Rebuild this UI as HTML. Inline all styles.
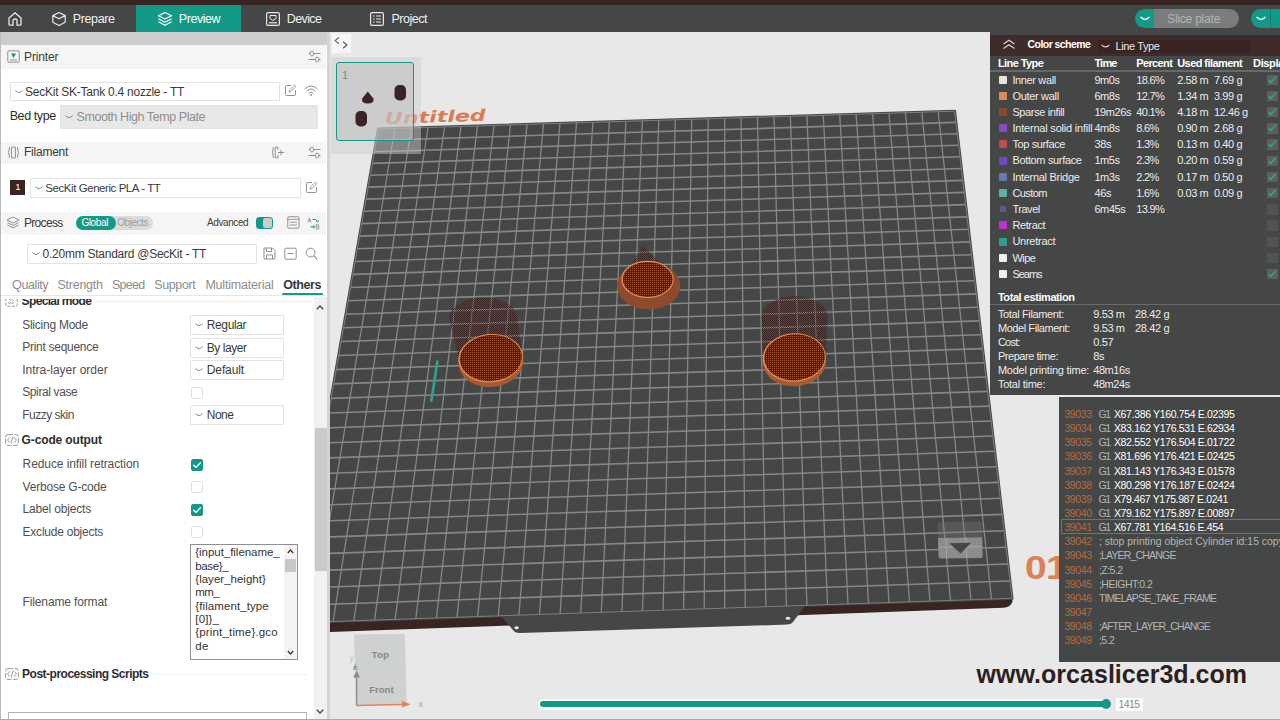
<!DOCTYPE html>
<html lang="en"><head><meta charset="utf-8"><title>OrcaSlicer Preview</title>
<style>
*{box-sizing:border-box;margin:0;padding:0}
html,body{width:1280px;height:720px;overflow:hidden;background:#e8e8e8}
body{font-family:"Liberation Sans",sans-serif;font-size:12px;color:#3a3a3a;position:relative}
.abs{position:absolute}
.t{position:absolute;white-space:nowrap;line-height:1}
svg{position:absolute;overflow:visible}

/* ---------- top bar ---------- */
#titlestrip{left:0;top:0;width:1280px;height:5px;background:#382423}
#topbar{left:0;top:5px;width:1280px;height:27px;background:#454746}
#tab-active{left:136px;top:5px;width:105px;height:27px;background:#139988}
.toptxt{color:#f2f2f2;font-size:12.5px;top:12px}
#slice-l{left:1135px;top:9px;width:19px;height:19px;background:#139988;border-radius:10px 0 0 10px}
#slice-r{left:1154px;top:9px;width:85px;height:19px;background:#7b7d7c;border-radius:0 10px 10px 0}
#slice-t{left:1167px;top:12.5px;font-size:12px;color:#b9bbba}
#print-l{left:1251px;top:9px;width:29px;height:19px;background:#139988;border-radius:10px 0 0 10px}
#print-d{left:1269.5px;top:9px;width:1.5px;height:19px;background:#107a6d}

/* ---------- left panel ---------- */
#left{left:0;top:32px;width:327px;height:688px;background:#fff}
#leftborder{left:0;top:32px;width:1px;height:688px;background:#b9bbba}
#band{left:0;top:32px;width:327px;height:13px;background:#cccecd}
.hdr{left:1px;width:325px;background:#f5f5f5}
.hdrtxt{font-size:12.5px;color:#3c3c3c}
.combo{border:1px solid #e2e2e2;background:#fff;border-radius:1px}
.ctext{font-size:12px;color:#3c3c3c}
.lbl{font-size:12px;color:#5a5a5a;left:22px}
.bold{font-weight:bold;color:#2e2e2e}
.cb{left:190.5px;width:12px;height:12px;border:1px solid #e0e0e0;border-radius:2px;background:#fff}
.cb.on{background:#139988;border-color:#139988}
.tabtxt{font-size:12.5px;color:#8c8c8c;top:278px}
#splitter{left:327px;top:32px;width:3px;height:688px;background:#d4d4d4}
#lscroll{left:314px;top:297px;width:13px;height:423px;background:#f1f1f1}
#lthumb{left:314.5px;top:428px;width:12px;height:142.5px;background:#c9cbca}

/* ---------- viewport ---------- */
#view{left:330px;top:32px;width:950px;height:688px;background:#e8e8e8}
#bottomline{left:0;top:719px;width:1280px;height:1px;background:#a9a9a9}

/* ---------- legend panel ---------- */
#legend{left:990px;top:32px;width:290px;height:363px;background:#454746}
#leghdr{left:990px;top:34.5px;width:290px;height:21px;background:#3f2b2a}
#legcombo{left:1098px;top:39.5px;width:153px;height:13.5px;background:#382423}
.lw{color:#f4f4f4;font-size:11px}
.lwb{color:#fff;font-size:11px;font-weight:bold}
.sw{width:8px;height:8px;left:999px;border-radius:1px}
.lcb{left:1267px;width:10.5px;height:10.5px;background:#525453}
.lcb.on{background:#5c5f5e}

/* ---------- gcode panel ---------- */
#gcode{left:1059px;top:397px;width:221px;height:265px;background:#454746}
.gn{color:#c9703f;font-size:10.5px;left:1064px}
.gt{color:#fff;font-size:10.5px;left:1099px}
.gg{color:#b4b6b5}
#gcur{left:1061px;top:519px;width:222px;height:15px;border:1px solid #8a6a5a}

</style></head>
<body>
<!-- ======= VIEWPORT ======= -->
<div id="view" class="abs"></div>
<svg id="plate" width="1280" height="720" viewBox="0 0 1280 720" style="left:0;top:0">
<defs>
<clipPath id="vclip"><rect x="330" y="32" width="950" height="688"/></clipPath>
<pattern id="dots" width="2" height="2" patternUnits="userSpaceOnUse"><rect width="2" height="2" fill="#3a2420"/><rect x="0" y="0" width="1" height="1" fill="#a05633"/></pattern>
<pattern id="ghost" width="2" height="2" patternUnits="userSpaceOnUse"><rect x="0" y="0" width="1" height="1" fill="#382423"/><rect x="1" y="1" width="1" height="1" fill="#382423" opacity=".75"/></pattern>
</defs>
<g clip-path="url(#vclip)">
<path d="M291.8,622.9 L1012.0,598.3 L1012.5,601.3 Q1011.0,607.3 1003.0,607.8 L291.8,633.4 Z" fill="#382423"/>
<path d="M500,614 L806,603 L804.5,606.5 L793,622 Q791,624.5 787,624.6 L520,633 Q515,633.2 513,630 L502,617 Z" fill="#454746"/>
<ellipse cx="516.6" cy="627.8" rx="2.2" ry="1.5" fill="#f2f2f2"/>
<ellipse cx="788" cy="618.3" rx="2.2" ry="1.5" fill="#f2f2f2"/>
<polygon points="378.4,129.0 954.6,111.2 1012.0,598.3 291.8,622.9" fill="#454746" stroke="#454746" stroke-width="3" stroke-linejoin="round"/>
<path d="M394.9,128.5 L312.5,622.2 M411.4,128.0 L333.1,621.5 M428.0,127.5 L353.8,620.8 M444.5,127.0 L374.5,620.1 M461.0,126.4 L395.1,619.4 M477.5,125.9 L415.8,618.7 M494.0,125.4 L436.4,618.0 M510.5,124.9 L457.0,617.3 M527.0,124.4 L477.7,616.6 M543.5,123.9 L498.3,615.8 M560.0,123.4 L518.9,615.1 M576.5,122.9 L539.5,614.4 M592.9,122.4 L560.1,613.7 M609.4,121.9 L580.7,613.0 M625.9,121.4 L601.3,612.3 M642.4,120.8 L621.9,611.6 M658.8,120.3 L642.5,610.9 M675.3,119.8 L663.1,610.2 M691.7,119.3 L683.6,609.5 M708.2,118.8 L704.2,608.8 M724.7,118.3 L724.7,608.1 M741.1,117.8 L745.3,607.4 M757.5,117.3 L765.9,606.7 M774.0,116.8 L786.4,606.0 M790.4,116.3 L806.9,605.3 M806.9,115.8 L827.5,604.6 M823.3,115.3 L848.0,603.9 M839.7,114.7 L868.5,603.2 M856.1,114.2 L889.0,602.5 M872.6,113.7 L909.5,601.8 M889.0,113.2 L930.0,601.1 M905.4,112.7 L950.5,600.4 M921.8,112.2 L971.0,599.7 M938.2,111.7 L991.5,599.0" stroke="#868886" stroke-width="1.3" fill="none"/>
<path d="M376.4,140.4 L955.9,122.4 M374.4,151.8 L957.3,133.7 M372.4,163.4 L958.6,145.2 M370.3,175.2 L960.0,156.8 M368.2,187.1 L961.4,168.5 M366.1,199.1 L962.8,180.4 M364.0,211.3 L964.2,192.4 M361.8,223.6 L965.6,204.6 M359.6,236.1 L967.1,216.9 M357.4,248.7 L968.5,229.3 M355.2,261.5 L970.0,241.9 M352.9,274.4 L971.5,254.7 M350.6,287.5 L973.0,267.6 M348.3,300.8 L974.6,280.7 M345.9,314.2 L976.1,293.9 M343.5,327.8 L977.7,307.3 M341.1,341.5 L979.3,320.9 M338.7,355.5 L980.9,334.7 M336.2,369.6 L982.6,348.6 M333.7,383.9 L984.2,362.7 M331.2,398.4 L985.9,377.0 M328.6,413.0 L987.6,391.4 M326.0,427.9 L989.4,406.1 M323.3,443.0 L991.1,421.0 M320.7,458.2 L992.9,436.0 M318.0,473.7 L994.7,451.3 M315.2,489.4 L996.5,466.7 M312.4,505.3 L998.3,482.4 M309.6,521.4 L1000.2,498.3 M306.7,537.7 L1002.1,514.4 M303.8,554.3 L1004.0,530.7 M300.9,571.1 L1006.0,547.2 M297.9,588.1 L1008.0,564.0 M294.9,605.4 L1010.0,581.0" stroke="#868886" stroke-width="1.6" fill="none"/>
<polygon points="378.4,129.0 954.6,111.2 1012.0,598.3 291.8,622.9" fill="none" stroke="#7c7e7c" stroke-width="1" stroke-linejoin="round"/>
<path d="M449.3,318.3 A33.9,21.0 0 0 1 517.1,318.3 L523.0,358.2 L458.2,358.2 Z" fill="url(#ghost)"/>
<clipPath id="dc1"><ellipse cx="490.9" cy="358.1" rx="31.1" ry="23.1" transform="rotate(-5 490.6 358.2)"/></clipPath>
<g transform="rotate(-5 490.6 358.2)">
<path d="M458.2,358.2 V362.7 A32.4,24.2 0 0 0 523.0,362.7 V358.2 Z" fill="#a9582f"/>
<ellipse cx="490.6" cy="358.2" rx="32.4" ry="24.2" fill="#e28a5e"/>
</g>
<rect x="454.2" y="328.0" width="72.8" height="60.4" fill="url(#dots)" clip-path="url(#dc1)"/>
<path d="M642.5,245.0 L631.5,264.7 L662.5,264.7 Z" fill="url(#ghost)"/>
<ellipse cx="648.7" cy="285.9" rx="31.7" ry="23.7" fill="#8e4b2b"/>
<ellipse cx="647.5" cy="279.4" rx="26.2" ry="18.7" fill="#e28a5e"/>
<ellipse cx="647.7" cy="279.4" rx="24.9" ry="17.5" fill="url(#dots)"/>
<path d="M761.5,317.0 A33.1,21.0 0 0 1 827.7,317.0 L825.9,357.5 L762.7,357.5 Z" fill="url(#ghost)"/>
<clipPath id="dc3"><ellipse cx="794.6" cy="357.4" rx="30.4" ry="23.1" transform="rotate(-3 794.3 357.5)"/></clipPath>
<g transform="rotate(-3 794.3 357.5)">
<path d="M762.7,357.5 V362.0 A31.6,24.2 0 0 0 825.9,362.0 V357.5 Z" fill="#a9582f"/>
<ellipse cx="794.3" cy="357.5" rx="31.6" ry="24.2" fill="#e28a5e"/>
</g>
<rect x="758.7" y="327.3" width="71.2" height="60.4" fill="url(#dots)" clip-path="url(#dc3)"/>
<path d="M437.5,360.5 L431.2,402" stroke="#2aa294" stroke-width="2.6" stroke-linecap="butt"/>
<g><path d="M937.6,524 Q937.6,522 940,522 L979.4,521.5 Q981.6,521.5 981.7,524 L982.2,537.4 L938,538 Z" fill="#7d7f7e" opacity=".3"/><path d="M938,537.9 L982.2,537.3 L982.8,556 Q982.8,558 980.8,558 L940.5,558.6 Q938.5,558.6 938.5,556.6 Z" fill="#8b8d8c"/><path d="M938.2,547.3 L982.5,546.6 M945.9,538 L946.6,558.4 M966,537.6 L966.8,558.2" stroke="#a6a8a7" stroke-width="1" fill="none"/><path d="M949.4,543.2 L971,542.8 L960.6,553.6 Z" fill="#454746"/></g>
</g>
</svg>
<div class="abs" style="left:332px;top:34px;width:19px;height:19px;background:#f6f6f6"></div>
<svg width="14" height="12" viewBox="0 0 14 12" style="left:334px;top:37px"><path d="M4.6 0.8 L1 3.6 L4.6 6.4 M9.4 5 L13 8 L9.4 11" fill="none" stroke="#555" stroke-width="1.1" stroke-linecap="round" stroke-linejoin="round"/></svg>
<svg width="120" height="30" viewBox="0 0 120 30" style="left:380px;top:101.5px"><text x="5" y="22" font-family="'DejaVu Sans','Liberation Sans',sans-serif" font-weight="bold" font-style="italic" font-size="16" fill="#da7b50" textLength="101" lengthAdjust="spacingAndGlyphs" transform="rotate(-1.8 5 22)">Untitled</text></svg>
<div class="abs" style="left:331px;top:57px;width:90px;height:97px;background:rgba(205,205,205,.45)"></div>
<div class="abs" style="left:335.6px;top:62px;width:78.6px;height:79px;background:rgba(190,190,190,.5);border:1.3px solid #139988;border-radius:3px"></div>
<div class="t" style="left:342px;top:70px;font-size:11px;color:#858585">1</div>
<svg width="80" height="80" viewBox="0 0 80 80" style="left:336px;top:62px"><rect x="58.5" y="23" width="11.5" height="15.5" rx="4.8" fill="#382423"/><rect x="19.5" y="49" width="11.5" height="15.5" rx="4.8" fill="#382423"/><path d="M31.8 29.5 L37.4 36.5 Q38.4 41.5 31.8 41.5 Q25.2 41.5 26.2 36.5 Z" fill="#382423"/></svg>
<div class="t" style="left:1024.6px;top:552.3px;font-size:32.5px;font-weight:bold;color:#dc8056;letter-spacing:-0.5px;transform:scaleX(1.2);transform-origin:0 0">01</div>
<svg width="100" height="90" viewBox="335 625 100 90" style="left:335px;top:625px"><polygon points="354,634.5 404.8,634 406.8,705.6 356,705.6" fill="#cfd1d0"/><text x="380.3" y="658" text-anchor="middle" font-family="'Liberation Sans',sans-serif" font-weight="bold" font-size="9" fill="#858786" textLength="17.5" lengthAdjust="spacingAndGlyphs">Top</text><text x="381.4" y="693" text-anchor="middle" font-family="'Liberation Sans',sans-serif" font-weight="bold" font-size="9" fill="#858786" textLength="24.5" lengthAdjust="spacingAndGlyphs">Front</text><path d="M356.6,705.4 V676" stroke="#8b8d8c" stroke-width="1.4"/><path d="M353.2,677.6 L356.6,670.6 L360,677.6 Z" fill="#8b8d8c"/><path d="M352.6,670 L355.2,662.5 L358.4,670 Z" fill="#aeb0af"/><rect x="354.2" y="666.5" width="1.4" height="1.4" fill="#139988"/><path d="M356.5,705.5 L403,704.3" stroke="#df8257" stroke-width="1.3"/><path d="M402,701 L410.5,704.2 L402.2,707.6 Z" fill="#df8257"/><text x="418.6" y="707" font-family="'Liberation Sans',sans-serif" font-size="9" fill="#a9a9a9">x</text><text x="349.5" y="661" font-family="'Liberation Sans',sans-serif" font-size="9" fill="#c4c4c4">y</text></svg>
<div class="abs" style="left:538px;top:699px;width:572px;height:10.5px;border-radius:5.2px;background:#fbfbfb"></div>
<div class="abs" style="left:540px;top:700.5px;width:566px;height:6.5px;border-radius:3.2px;background:#139988"></div>
<div class="abs" style="left:1101.3px;top:698.8px;width:10px;height:10px;border-radius:5px;background:#139988"></div>
<div class="abs" style="left:1116px;top:697.5px;width:27px;height:13px;background:#fbfbfb"></div>
<div class="t " style="left:1118.4px;top:698.5px;font-size:10.5px;letter-spacing:-0.540px;color:#8a8a8a;">1415</div>
<div class="t " style="left:976.6px;top:661.5px;font-size:25px;letter-spacing:0.024px;font-weight:bold;color:#2d1f1d;">www.orcaslicer3d.com</div>

<!-- ======= TOP BAR ======= -->
<div id="titlestrip" class="abs"></div>
<div id="topbar" class="abs"></div>
<div id="tab-active" class="abs"></div>
<!-- home icon -->
<svg width="16" height="16" viewBox="0 0 16 16" style="left:7px;top:11px"><path d="M2 7 L8 1.8 L14 7 V13.2 Q14 14.2 13 14.2 H10 V9.5 Q10 8 8 8 Q6 8 6 9.5 V14.2 H3 Q2 14.2 2 13.2 Z" fill="none" stroke="#e8e8e8" stroke-width="1.3" stroke-linejoin="round"/></svg>
<!-- prepare: cube -->
<svg width="16" height="16" viewBox="0 0 16 16" style="left:51px;top:11px"><path d="M8 1.5 L14.2 4.6 V11.2 L8 14.5 L1.8 11.2 V4.6 Z M1.8 4.6 L8 7.8 L14.2 4.6" fill="none" stroke="#e8e8e8" stroke-width="1.2" stroke-linejoin="round"/></svg>
<div class="t " style="left:72.7px;top:12.8px;font-size:12.5px;letter-spacing:-0.353px;color:#f0f0f0;">Prepare</div>
<!-- preview: layers -->
<svg width="16" height="16" viewBox="0 0 16 16" style="left:157px;top:11px"><path d="M8 1.5 L14.5 4.8 L8 8 L1.5 4.8 Z M1.8 8 L8 11.2 L14.2 8 M1.8 11 L8 14.3 L14.2 11" fill="none" stroke="#fff" stroke-width="1.2" stroke-linejoin="round" stroke-linecap="round"/></svg>
<div class="t " style="left:178.8px;top:12.8px;font-size:12.5px;letter-spacing:-0.451px;color:#ffffff;">Preview</div>
<!-- device -->
<svg width="16" height="16" viewBox="0 0 16 16" style="left:265px;top:11px"><rect x="1.6" y="1.6" width="12.8" height="12.8" rx="1.5" fill="none" stroke="#e8e8e8" stroke-width="1.2"/><path d="M5 4.5 H11 V7.5 L8 9.5 L5 7.5 Z" fill="none" stroke="#e8e8e8" stroke-width="1"/><path d="M4 11.8 H12" stroke="#e8e8e8" stroke-width="1.2"/></svg>
<div class="t " style="left:286.8px;top:12.8px;font-size:12.5px;letter-spacing:-0.618px;color:#f0f0f0;">Device</div>
<!-- project -->
<svg width="16" height="16" viewBox="0 0 16 16" style="left:369px;top:11px"><rect x="1.6" y="1.6" width="12.8" height="12.8" rx="1.5" fill="none" stroke="#e8e8e8" stroke-width="1.2"/><path d="M4 5 H5.5 M7 5 H12 M4 8 H5.5 M7 8 H12 M4 11 H5.5 M7 11 H12" stroke="#e8e8e8" stroke-width="1.1"/></svg>
<div class="t " style="left:391.4px;top:12.8px;font-size:12.5px;letter-spacing:-0.458px;color:#f0f0f0;">Project</div>
<!-- slice plate -->
<div id="slice-l" class="abs"></div><div id="slice-r" class="abs"></div>
<svg width="10" height="6" viewBox="0 0 10 6" style="left:1140px;top:16px"><path d="M1 1.2 Q5 5.5 9 1.2" fill="none" stroke="#fff" stroke-width="1.4" stroke-linecap="round"/></svg>
<div class="t " style="left:1167.1px;top:12.9px;font-size:12px;letter-spacing:-0.215px;color:#b4b6b5;">Slice plate</div>
<div id="print-l" class="abs"></div><div id="print-d" class="abs"></div>
<svg width="10" height="6" viewBox="0 0 10 6" style="left:1256px;top:16px"><path d="M1 1.2 Q5 5.5 9 1.2" fill="none" stroke="#fff" stroke-width="1.4" stroke-linecap="round"/></svg>


<!-- ======= LEFT PANEL ======= -->
<div id="left" class="abs"></div>
<div id="band" class="abs"></div>
<div id="leftborder" class="abs"></div>
<div id="splitter" class="abs"></div>
<div class="abs hdr" style="top:45px;height:24px"></div>
<svg width="13" height="13" viewBox="0 0 13 13" style="left:7px;top:50px"><rect x="0.8" y="0.8" width="11.4" height="11.4" rx="1.2" fill="none" stroke="#8e908f" stroke-width="1"/><path d="M4 3.5 H9 L6.5 8 Z" fill="#139988"/><path d="M3 10 H10" stroke="#8e908f" stroke-width="1"/></svg>
<div class="t " style="left:24.0px;top:50.7px;font-size:12px;letter-spacing:-0.121px;color:#3a3a3a;">Printer</div>
<svg width="13" height="13" viewBox="0 0 13 13" style="left:308px;top:50px"><path d="M0.5 3.5 H2 M5.6 3.5 H12.5 M0.5 9.5 H7.4 M11 9.5 H12.5" stroke="#8e908f" stroke-width="1" fill="none"/><rect x="2.2" y="1.2" width="3.2" height="4.6" rx="1.2" fill="none" stroke="#8e908f" stroke-width="1"/><rect x="7.6" y="7.2" width="3.2" height="4.6" rx="1.2" fill="none" stroke="#8e908f" stroke-width="1"/></svg>
<div class="abs combo" style="left:10px;top:82px;width:270px;height:19px;"></div><svg width="8" height="5" viewBox="0 0 8 5" style="left:15px;top:89.5px"><path d="M0.6 0.8 Q4 4.6 7.4 0.8" fill="none" stroke="#858585" stroke-width="0.95" stroke-linecap="round"/></svg><div class="t " style="left:25.1px;top:85.7px;font-size:12px;letter-spacing:-0.251px;color:#3a3a3a;">SecKit SK-Tank 0.4 nozzle - TT</div>
<svg width="13" height="13" viewBox="0 0 13 13" style="left:284px;top:84px"><path d="M7 1.5 H2.5 Q1.5 1.5 1.5 2.5 V10.5 Q1.5 11.5 2.5 11.5 H10.5 Q11.5 11.5 11.5 10.5 V6" fill="none" stroke="#8e908f" stroke-width="1"/><path d="M5 8.2 L5.4 6.2 L10.6 1 L12 2.4 L6.8 7.6 Z" fill="none" stroke="#8e908f" stroke-width="0.9" stroke-linejoin="round"/></svg>
<svg width="14" height="13" viewBox="0 0 14 13" style="left:304px;top:84px"><path d="M1 4.6 Q7 -1 13 4.6 M3 6.8 Q7 3 11 6.8 M5 9 Q7 7.2 9 9" fill="none" stroke="#8e908f" stroke-width="1" stroke-linecap="round"/><circle cx="7" cy="11" r="1" fill="#8e908f"/></svg>
<div class="t " style="left:9.7px;top:110.3px;font-size:12.5px;letter-spacing:-0.405px;color:#2e2e2e;">Bed type</div>
<div class="abs combo" style="left:60px;top:105px;width:258px;height:24px;background:#e8e8e8;border-color:#e2e2e2"></div><svg width="8" height="5" viewBox="0 0 8 5" style="left:65px;top:115.0px"><path d="M0.6 0.8 Q4 4.6 7.4 0.8" fill="none" stroke="#858585" stroke-width="0.95" stroke-linecap="round"/></svg><div class="t " style="left:76.5px;top:110.9px;font-size:12.5px;letter-spacing:-0.429px;color:#8f8f8f;">Smooth High Temp Plate</div>
<div class="abs hdr" style="top:142px;height:22px"></div>
<svg width="13" height="13" viewBox="0 0 13 13" style="left:7px;top:146px"><path d="M2.6 1.2 Q0.8 6.5 2.6 11.8 M4.6 1.2 V11.8 M8.4 1.2 V11.8 M10.4 1.2 Q12.2 6.5 10.4 11.8 M4.6 1.2 Q6.5 0.6 8.4 1.2 M4.6 11.8 Q6.5 12.4 8.4 11.8" fill="none" stroke="#8e908f" stroke-width="1"/></svg>
<div class="t " style="left:24.0px;top:145.9px;font-size:12px;letter-spacing:-0.239px;color:#3a3a3a;">Filament</div>
<svg width="14" height="13" viewBox="0 0 14 13" style="left:271px;top:146px"><path d="M2.4 1.2 Q0.8 6.5 2.4 11.8 M4.2 1.2 V11.8 M4.2 1.2 H7 M4.2 11.8 H7 M7 1.2 V4 M7 9 V11.8 M7 6.5 H13 M10 3.8 V9.2" fill="none" stroke="#8e908f" stroke-width="1"/></svg>
<svg width="13" height="13" viewBox="0 0 13 13" style="left:308px;top:146px"><path d="M0.5 3.5 H2 M5.6 3.5 H12.5 M0.5 9.5 H7.4 M11 9.5 H12.5" stroke="#8e908f" stroke-width="1" fill="none"/><rect x="2.2" y="1.2" width="3.2" height="4.6" rx="1.2" fill="none" stroke="#8e908f" stroke-width="1"/><rect x="7.6" y="7.2" width="3.2" height="4.6" rx="1.2" fill="none" stroke="#8e908f" stroke-width="1"/></svg>
<div class="abs" style="left:10px;top:179.7px;width:15.4px;height:15.3px;background:#382423"></div>
<div class="t ctext" style="left:15.2px;top:182.2px;color:#fff;font-size:9.5px">1</div>
<div class="abs combo" style="left:30px;top:178px;width:271px;height:20px;"></div><svg width="8" height="5" viewBox="0 0 8 5" style="left:35px;top:186.0px"><path d="M0.6 0.8 Q4 4.6 7.4 0.8" fill="none" stroke="#858585" stroke-width="0.95" stroke-linecap="round"/></svg><div class="t " style="left:45.3px;top:182.5px;font-size:11.5px;letter-spacing:-0.437px;color:#3a3a3a;">SecKit Generic PLA - TT</div>
<svg width="13" height="13" viewBox="0 0 13 13" style="left:305px;top:181px"><path d="M7 1.5 H2.5 Q1.5 1.5 1.5 2.5 V10.5 Q1.5 11.5 2.5 11.5 H10.5 Q11.5 11.5 11.5 10.5 V6" fill="none" stroke="#8e908f" stroke-width="1"/><path d="M5 8.2 L5.4 6.2 L10.6 1 L12 2.4 L6.8 7.6 Z" fill="none" stroke="#8e908f" stroke-width="0.9" stroke-linejoin="round"/></svg>
<div class="abs hdr" style="top:212px;height:23px"></div>
<svg width="14" height="13" viewBox="0 0 14 13" style="left:6px;top:216px"><path d="M7 1 L13 4 L7 7 L1 4 Z M1.4 6.6 L7 9.4 L12.6 6.6 M1.4 9 L7 11.9 L12.6 9" fill="none" stroke="#8e908f" stroke-width="1" stroke-linejoin="round"/></svg>
<div class="t " style="left:24.0px;top:216.7px;font-size:12px;letter-spacing:-0.693px;color:#3a3a3a;">Process</div>
<div class="abs" style="left:76px;top:215.8px;width:77px;height:14.4px;border-radius:7.2px;background:#dcdcdc"></div>
<div class="abs" style="left:76px;top:215.8px;width:39.5px;height:14.4px;border-radius:7.2px;background:#139988"></div>
<div class="t " style="left:81.4px;top:217.7px;font-size:10px;letter-spacing:-0.385px;color:#fff;">Global</div>
<div class="t " style="left:117.3px;top:217.7px;font-size:10px;letter-spacing:-0.486px;color:#9c9c9c;">Objects</div>
<div class="t " style="left:207.1px;top:217.7px;font-size:10px;letter-spacing:-0.422px;color:#3c3c3c;">Advanced</div>
<div class="abs" style="left:255.6px;top:217px;width:17.4px;height:12px;border-radius:3.5px;background:#139988"></div>
<div class="abs" style="left:263px;top:218.2px;width:8.6px;height:9.5px;border-radius:2px;background:#c9cfce"></div>
<svg width="13" height="13" viewBox="0 0 13 13" style="left:287px;top:216.4px"><rect x="0.8" y="0.8" width="11.2" height="11.4" rx="1" fill="none" stroke="#8e908f" stroke-width="1"/><path d="M0.8 3.4 H12 M2.8 6.2 H10 M2.8 9 H10" stroke="#8e908f" stroke-width="0.9"/></svg>
<svg width="13" height="13" viewBox="0 0 13 13" style="left:307px;top:216.5px"><path d="M0.8 5.4 L2.4 1 L4 5.4 M1.3 4 H3.5 M9.2 7.4 V12 H11 Q12.2 11.8 12 10.8 Q11.9 9.8 11 9.7 H9.2 M11 9.7 Q12 9.4 11.8 8.4 Q11.6 7.4 10.8 7.4 H9.2" fill="none" stroke="#8e908f" stroke-width="0.9"/><path d="M5.6 2.4 Q9.4 1.6 10.4 4.6 M9 3.6 L10.5 5 L11.6 3.2 M3.4 9.8 H7.4 M6 8.4 L7.6 9.8 L6 11.2" fill="none" stroke="#139988" stroke-width="1"/></svg>
<div class="abs combo" style="left:27px;top:244px;width:230px;height:20px;"></div><svg width="8" height="5" viewBox="0 0 8 5" style="left:32px;top:252.0px"><path d="M0.6 0.8 Q4 4.6 7.4 0.8" fill="none" stroke="#858585" stroke-width="0.95" stroke-linecap="round"/></svg><div class="t " style="left:42.6px;top:248.2px;font-size:12px;letter-spacing:-0.253px;color:#3a3a3a;">0.20mm Standard @SecKit - TT</div>
<svg width="13" height="13" viewBox="0 0 13 13" style="left:263px;top:247px"><path d="M1 1 H9.5 L12 3.5 V12 H1 Z M3.5 1 V4.5 H8.5 V1 M3.5 12 V8 H9.5 V12" fill="none" stroke="#8e908f" stroke-width="1" stroke-linejoin="round"/></svg>
<svg width="13" height="13" viewBox="0 0 13 13" style="left:284px;top:247px"><rect x="0.8" y="1.2" width="11.4" height="11" rx="1.2" fill="none" stroke="#8e908f" stroke-width="1"/><path d="M3.4 6.6 H9.6" stroke="#8e908f" stroke-width="1"/></svg>
<svg width="13" height="13" viewBox="0 0 13 13" style="left:305px;top:247px"><circle cx="5.6" cy="5.6" r="4.4" fill="none" stroke="#8e908f" stroke-width="1"/><path d="M8.8 8.8 L12.2 12.2" stroke="#8e908f" stroke-width="1.1" stroke-linecap="round"/></svg>
<div class="t " style="left:12.1px;top:278.7px;font-size:12.5px;letter-spacing:-0.401px;color:#8c8c8c;">Quality</div>
<div class="t " style="left:57.5px;top:278.7px;font-size:12.5px;letter-spacing:-0.257px;color:#8c8c8c;">Strength</div>
<div class="t " style="left:112.0px;top:278.7px;font-size:12.5px;letter-spacing:-0.749px;color:#8c8c8c;">Speed</div>
<div class="t " style="left:154.2px;top:278.7px;font-size:12.5px;letter-spacing:-0.369px;color:#8c8c8c;">Support</div>
<div class="t " style="left:205.4px;top:278.7px;font-size:12.5px;letter-spacing:-0.196px;color:#8c8c8c;">Multimaterial</div>
<div class="t " style="left:283.3px;top:278.7px;font-size:12.5px;letter-spacing:-0.432px;font-weight:bold;color:#363636;">Others</div>
<div class="abs" style="left:282px;top:293px;width:41px;height:2px;background:#139988;border-radius:1px"></div>
<div class="abs" style="left:1px;top:295px;width:325px;height:1px;background:#e6e6e6"></div>
<div class="abs" style="left:1px;top:298.6px;width:313px;height:420.4px;overflow:hidden"><div class="abs" style="left:-1px;top:-298.6px;width:327px;height:720px"><div class="abs" style="left:96px;top:301px;width:215px;height:0;border-top:1px dotted #dcdcdc"></div><div class="abs" style="left:152px;top:674px;width:155px;height:0;border-top:1px dotted #e6e6e6"></div>
<div class="t " style="left:21.6px;top:295.2px;font-size:12px;letter-spacing:-0.647px;font-weight:bold;color:#2e2e2e;">Special mode</div>
<svg width="13" height="13" viewBox="0 0 13 13" style="left:5px;top:294px"><rect x="0.8" y="0.8" width="11.4" height="11.4" rx="1.2" fill="none" stroke="#8e908f" stroke-width="0.9" stroke-dasharray="3 1.5"/><path d="M3 4 L6 7 M5 3.5 L9 7.5 M3 9 H9" stroke="#8e908f" stroke-width="0.9"/></svg>
<div class="t " style="left:22.2px;top:318.8px;font-size:12px;letter-spacing:-0.242px;color:#505050;">Slicing Mode</div>
<div class="abs combo" style="left:190px;top:315px;width:94px;height:20px;"></div><svg width="8" height="5" viewBox="0 0 8 5" style="left:195px;top:323.0px"><path d="M0.6 0.8 Q4 4.6 7.4 0.8" fill="none" stroke="#858585" stroke-width="0.95" stroke-linecap="round"/></svg><div class="t " style="left:206.8px;top:319.2px;font-size:12px;letter-spacing:-0.389px;color:#3a3a3a;">Regular</div>
<div class="t " style="left:22.2px;top:341.3px;font-size:12px;letter-spacing:-0.275px;color:#505050;">Print sequence</div>
<div class="abs combo" style="left:190px;top:338px;width:94px;height:20px;"></div><svg width="8" height="5" viewBox="0 0 8 5" style="left:195px;top:346.0px"><path d="M0.6 0.8 Q4 4.6 7.4 0.8" fill="none" stroke="#858585" stroke-width="0.95" stroke-linecap="round"/></svg><div class="t " style="left:206.8px;top:342.2px;font-size:12px;letter-spacing:-0.444px;color:#3a3a3a;">By layer</div>
<div class="t " style="left:22.2px;top:363.8px;font-size:12px;letter-spacing:0.008px;color:#505050;">Intra-layer order</div>
<div class="abs combo" style="left:190px;top:360px;width:94px;height:20px;"></div><svg width="8" height="5" viewBox="0 0 8 5" style="left:195px;top:368.0px"><path d="M0.6 0.8 Q4 4.6 7.4 0.8" fill="none" stroke="#858585" stroke-width="0.95" stroke-linecap="round"/></svg><div class="t " style="left:206.8px;top:364.2px;font-size:12px;letter-spacing:-0.117px;color:#3a3a3a;">Default</div>
<div class="t " style="left:22.2px;top:408.8px;font-size:12px;letter-spacing:-0.488px;color:#505050;">Fuzzy skin</div>
<div class="abs combo" style="left:190px;top:405px;width:94px;height:20px;"></div><svg width="8" height="5" viewBox="0 0 8 5" style="left:195px;top:413.0px"><path d="M0.6 0.8 Q4 4.6 7.4 0.8" fill="none" stroke="#858585" stroke-width="0.95" stroke-linecap="round"/></svg><div class="t " style="left:206.8px;top:409.2px;font-size:12px;letter-spacing:-0.547px;color:#3a3a3a;">None</div>
<div class="t " style="left:22.2px;top:386.4px;font-size:12px;letter-spacing:-0.378px;color:#505050;">Spiral vase</div>
<div class="abs cb" style="top:386.5px"></div>
<svg width="14" height="12" viewBox="0 0 14 12" style="left:5px;top:434px"><path d="M3 0.6 H11 Q13.4 0.6 13.4 3 V9 Q13.4 11.4 11 11.4 H3 Q0.6 11.4 0.6 9 V3 Q0.6 0.6 3 0.6" fill="none" stroke="#8e908f" stroke-width="0.9" stroke-dasharray="5 1.5"/><path d="M4.6 3.6 L2.6 6 L4.6 8.4 M9.4 3.6 L11.4 6 L9.4 8.4 M7.8 3 L6.2 9" fill="none" stroke="#8e908f" stroke-width="0.9" stroke-linecap="round"/></svg>
<div class="t " style="left:21.6px;top:434.4px;font-size:12px;letter-spacing:-0.130px;font-weight:bold;color:#2e2e2e;">G-code output</div>
<div class="t " style="left:22.6px;top:458.4px;font-size:12px;letter-spacing:-0.093px;color:#505050;">Reduce infill retraction</div>
<div class="abs cb on" style="top:458.5px"></div><svg width="12" height="12" viewBox="0 0 12 12" style="left:191px;top:458.5px"><path d="M2.6 6.2 L5 8.4 L9.4 3.8" fill="none" stroke="#fff" stroke-width="1.3" stroke-linecap="round" stroke-linejoin="round"/></svg>
<div class="t " style="left:22.6px;top:480.9px;font-size:12px;letter-spacing:-0.202px;color:#505050;">Verbose G-code</div>
<div class="abs cb" style="top:481px"></div>
<div class="t " style="left:22.6px;top:503.4px;font-size:12px;letter-spacing:-0.171px;color:#505050;">Label objects</div>
<div class="abs cb on" style="top:503.5px"></div><svg width="12" height="12" viewBox="0 0 12 12" style="left:191px;top:503.5px"><path d="M2.6 6.2 L5 8.4 L9.4 3.8" fill="none" stroke="#fff" stroke-width="1.3" stroke-linecap="round" stroke-linejoin="round"/></svg>
<div class="t " style="left:22.6px;top:525.9px;font-size:12px;letter-spacing:-0.237px;color:#505050;">Exclude objects</div>
<div class="abs cb" style="top:526px"></div>
<div class="t " style="left:22.6px;top:596.4px;font-size:12px;letter-spacing:-0.140px;color:#505050;">Filename format</div>
<div class="abs" style="left:190px;top:544px;width:108px;height:116px;border:1px solid #8f8f8f;background:#fff"></div>
<div class="t " style="left:195.3px;top:547.2px;font-size:11.5px;letter-spacing:-0.040px;color:#333;">{input_filename_</div>
<div class="t " style="left:195.3px;top:560.5px;font-size:11.5px;letter-spacing:-0.362px;color:#333;">base}_</div>
<div class="t " style="left:195.3px;top:573.9px;font-size:11.5px;letter-spacing:0.012px;color:#333;">{layer_height}</div>
<div class="t " style="left:195.3px;top:587.2px;font-size:11.5px;letter-spacing:-0.619px;color:#333;">mm_</div>
<div class="t " style="left:195.3px;top:600.6px;font-size:11.5px;letter-spacing:0.090px;color:#333;">{filament_type</div>
<div class="t " style="left:195.3px;top:613.9px;font-size:11.5px;letter-spacing:0.136px;color:#333;">[0]}_</div>
<div class="t " style="left:195.3px;top:627.3px;font-size:11.5px;letter-spacing:0.162px;color:#333;">{print_time}.gco</div>
<div class="t " style="left:195.3px;top:640.6px;font-size:11.5px;letter-spacing:0.204px;color:#333;">de</div>
<div class="abs" style="left:284px;top:545px;width:13px;height:114px;background:#f3f3f3"></div>
<div class="abs" style="left:285px;top:559px;width:11px;height:13px;background:#c8c8c8"></div>
<svg width="7" height="5" viewBox="0 0 7 5" style="left:287px;top:549px"><path d="M0.8 4 L3.5 1 L6.2 4" fill="none" stroke="#333" stroke-width="1.2"/></svg>
<svg width="7" height="5" viewBox="0 0 7 5" style="left:287px;top:650px"><path d="M0.8 1 L3.5 4 L6.2 1" fill="none" stroke="#333" stroke-width="1.2"/></svg>
<svg width="14" height="12" viewBox="0 0 14 12" style="left:5px;top:668px"><path d="M3 0.6 H11 Q13.4 0.6 13.4 3 V9 Q13.4 11.4 11 11.4 H3 Q0.6 11.4 0.6 9 V3 Q0.6 0.6 3 0.6" fill="none" stroke="#8e908f" stroke-width="0.9" stroke-dasharray="5 1.5"/><path d="M4.6 3.6 L2.6 6 L4.6 8.4 M9.4 3.6 L11.4 6 L9.4 8.4 M7.8 3 L6.2 9" fill="none" stroke="#8e908f" stroke-width="0.9" stroke-linecap="round"/></svg>
<div class="t " style="left:22.1px;top:668.4px;font-size:12px;letter-spacing:-0.506px;font-weight:bold;color:#2e2e2e;">Post-processing Scripts</div>
<div class="abs" style="left:8px;top:712px;width:299px;height:20px;border:1px solid #b5b5b5;background:#fff"></div>
</div></div>
<div id="lscroll" class="abs"></div><div id="lthumb" class="abs"></div>
<svg width="8" height="5" viewBox="0 0 8 5" style="left:316px;top:305px"><path d="M0.8 4.2 L4 1 L7.2 4.2" fill="none" stroke="#444" stroke-width="1.3"/></svg>
<svg width="8" height="5" viewBox="0 0 8 5" style="left:316px;top:709px"><path d="M0.8 0.8 L4 4 L7.2 0.8" fill="none" stroke="#444" stroke-width="1.3"/></svg>

<!-- ======= LEGEND ======= -->
<div id="legend" class="abs"></div>
<div id="leghdr" class="abs"></div>
<div id="legcombo" class="abs"></div>
<svg width="14" height="11" viewBox="0 0 14 11" style="left:1002px;top:39px"><path d="M1.5 5 L7 1.2 L12.5 5 M1.5 9.5 L7 5.7 L12.5 9.5" fill="none" stroke="#d8d8d8" stroke-width="1.1"/></svg>
<div class="t " style="left:1027.6px;top:39.2px;font-size:10.5px;letter-spacing:-0.570px;font-weight:bold;color:#fff;">Color scheme</div>
<svg width="9" height="5" viewBox="0 0 9 5" style="left:1101px;top:44px"><path d="M0.6 0.8 Q4.5 5 8.4 0.8" fill="none" stroke="#e0e0e0" stroke-width="1.1"/></svg>
<div class="t " style="left:1115.5px;top:40.8px;font-size:11px;letter-spacing:-0.378px;color:#e6e6e6;">Line Type</div>
<div class="t " style="left:997.9px;top:57.5px;font-size:11px;letter-spacing:-0.570px;font-weight:bold;color:#fff;">Line Type</div>
<div class="t " style="left:1094.4px;top:57.5px;font-size:11px;letter-spacing:-0.794px;font-weight:bold;color:#fff;">Time</div>
<div class="t " style="left:1136.2px;top:57.5px;font-size:11px;letter-spacing:-0.622px;font-weight:bold;color:#fff;">Percent</div>
<div class="t " style="left:1177.2px;top:57.5px;font-size:11px;letter-spacing:-0.556px;font-weight:bold;color:#fff;">Used filament</div>
<div class="t " style="left:1253.1px;top:57.5px;font-size:11px;letter-spacing:-0.376px;font-weight:bold;color:#fff;">Display</div>
<div class="abs" style="left:990px;top:70.2px;width:290px;height:1.6px;background:#676968"></div>
<div class="abs sw" style="top:75.5px;background:#e8e4e0"></div>
<div class="t " style="left:1012.4px;top:74.5px;font-size:11px;letter-spacing:-0.368px;color:#ececec;">Inner wall</div>
<div class="t " style="left:1094.4px;top:74.5px;font-size:11px;letter-spacing:-0.403px;color:#ececec;">9m0s</div>
<div class="t " style="left:1136.2px;top:74.5px;font-size:11px;letter-spacing:-0.624px;color:#ececec;">18.6%</div>
<div class="t " style="left:1177.2px;top:74.5px;font-size:11px;letter-spacing:-0.448px;color:#ececec;">2.58 m</div>
<div class="t " style="left:1214.0px;top:74.5px;font-size:11px;letter-spacing:-0.408px;color:#ececec;">7.69 g</div>
<div class="abs lcb on" style="top:74.5px"></div>
<svg width="10" height="10" viewBox="0 0 10 10" style="left:1267px;top:74.5px"><path d="M1.8 5.2 L4 7.4 L8.6 2" fill="none" stroke="#1fb09e" stroke-width="1.5"/></svg>
<div class="abs sw" style="top:91.7px;background:#e0895c"></div>
<div class="t " style="left:1012.4px;top:90.7px;font-size:11px;letter-spacing:-0.312px;color:#ececec;">Outer wall</div>
<div class="t " style="left:1094.4px;top:90.7px;font-size:11px;letter-spacing:-0.403px;color:#ececec;">6m8s</div>
<div class="t " style="left:1136.2px;top:90.7px;font-size:11px;letter-spacing:-0.624px;color:#ececec;">12.7%</div>
<div class="t " style="left:1177.2px;top:90.7px;font-size:11px;letter-spacing:-0.448px;color:#ececec;">1.34 m</div>
<div class="t " style="left:1214.0px;top:90.7px;font-size:11px;letter-spacing:-0.408px;color:#ececec;">3.99 g</div>
<div class="abs lcb on" style="top:90.7px"></div>
<svg width="10" height="10" viewBox="0 0 10 10" style="left:1267px;top:90.7px"><path d="M1.8 5.2 L4 7.4 L8.6 2" fill="none" stroke="#1fb09e" stroke-width="1.5"/></svg>
<div class="abs sw" style="top:107.9px;background:#8a4a2c"></div>
<div class="t " style="left:1012.4px;top:106.9px;font-size:11px;letter-spacing:-0.374px;color:#ececec;">Sparse infill</div>
<div class="t " style="left:1094.4px;top:106.9px;font-size:11px;letter-spacing:-0.391px;color:#ececec;">19m26s</div>
<div class="t " style="left:1136.2px;top:106.9px;font-size:11px;letter-spacing:-0.624px;color:#ececec;">40.1%</div>
<div class="t " style="left:1177.2px;top:106.9px;font-size:11px;letter-spacing:-0.448px;color:#ececec;">4.18 m</div>
<div class="t " style="left:1214.0px;top:106.9px;font-size:11px;letter-spacing:-0.419px;color:#ececec;">12.46 g</div>
<div class="abs lcb on" style="top:106.9px"></div>
<svg width="10" height="10" viewBox="0 0 10 10" style="left:1267px;top:106.9px"><path d="M1.8 5.2 L4 7.4 L8.6 2" fill="none" stroke="#1fb09e" stroke-width="1.5"/></svg>
<div class="abs sw" style="top:124.1px;background:#8050c0"></div>
<div class="t " style="left:1012.4px;top:123.0px;font-size:11px;letter-spacing:-0.199px;color:#ececec;">Internal solid infill</div>
<div class="t " style="left:1094.4px;top:123.0px;font-size:11px;letter-spacing:-0.403px;color:#ececec;">4m8s</div>
<div class="t " style="left:1136.2px;top:123.0px;font-size:11px;letter-spacing:-0.627px;color:#ececec;">8.6%</div>
<div class="t " style="left:1177.2px;top:123.0px;font-size:11px;letter-spacing:-0.448px;color:#ececec;">0.90 m</div>
<div class="t " style="left:1214.0px;top:123.0px;font-size:11px;letter-spacing:-0.408px;color:#ececec;">2.68 g</div>
<div class="abs lcb on" style="top:123.1px"></div>
<svg width="10" height="10" viewBox="0 0 10 10" style="left:1267px;top:123.1px"><path d="M1.8 5.2 L4 7.4 L8.6 2" fill="none" stroke="#1fb09e" stroke-width="1.5"/></svg>
<div class="abs sw" style="top:140.3px;background:#c04a50"></div>
<div class="t " style="left:1012.4px;top:139.2px;font-size:11px;letter-spacing:-0.379px;color:#ececec;">Top surface</div>
<div class="t " style="left:1094.4px;top:139.2px;font-size:11px;letter-spacing:-0.355px;color:#ececec;">38s</div>
<div class="t " style="left:1136.2px;top:139.2px;font-size:11px;letter-spacing:-0.627px;color:#ececec;">1.3%</div>
<div class="t " style="left:1177.2px;top:139.2px;font-size:11px;letter-spacing:-0.448px;color:#ececec;">0.13 m</div>
<div class="t " style="left:1214.0px;top:139.2px;font-size:11px;letter-spacing:-0.408px;color:#ececec;">0.40 g</div>
<div class="abs lcb on" style="top:139.3px"></div>
<svg width="10" height="10" viewBox="0 0 10 10" style="left:1267px;top:139.3px"><path d="M1.8 5.2 L4 7.4 L8.6 2" fill="none" stroke="#1fb09e" stroke-width="1.5"/></svg>
<div class="abs sw" style="top:156.5px;background:#7048c0"></div>
<div class="t " style="left:1012.4px;top:155.4px;font-size:11px;letter-spacing:-0.341px;color:#ececec;">Bottom surface</div>
<div class="t " style="left:1094.4px;top:155.4px;font-size:11px;letter-spacing:-0.403px;color:#ececec;">1m5s</div>
<div class="t " style="left:1136.2px;top:155.4px;font-size:11px;letter-spacing:-0.627px;color:#ececec;">2.3%</div>
<div class="t " style="left:1177.2px;top:155.4px;font-size:11px;letter-spacing:-0.448px;color:#ececec;">0.20 m</div>
<div class="t " style="left:1214.0px;top:155.4px;font-size:11px;letter-spacing:-0.408px;color:#ececec;">0.59 g</div>
<div class="abs lcb on" style="top:155.5px"></div>
<svg width="10" height="10" viewBox="0 0 10 10" style="left:1267px;top:155.5px"><path d="M1.8 5.2 L4 7.4 L8.6 2" fill="none" stroke="#1fb09e" stroke-width="1.5"/></svg>
<div class="abs sw" style="top:172.7px;background:#6a7ab0"></div>
<div class="t " style="left:1012.4px;top:171.6px;font-size:11px;letter-spacing:-0.290px;color:#ececec;">Internal Bridge</div>
<div class="t " style="left:1094.4px;top:171.6px;font-size:11px;letter-spacing:-0.403px;color:#ececec;">1m3s</div>
<div class="t " style="left:1136.2px;top:171.6px;font-size:11px;letter-spacing:-0.627px;color:#ececec;">2.2%</div>
<div class="t " style="left:1177.2px;top:171.6px;font-size:11px;letter-spacing:-0.448px;color:#ececec;">0.17 m</div>
<div class="t " style="left:1214.0px;top:171.6px;font-size:11px;letter-spacing:-0.408px;color:#ececec;">0.50 g</div>
<div class="abs lcb on" style="top:171.7px"></div>
<svg width="10" height="10" viewBox="0 0 10 10" style="left:1267px;top:171.7px"><path d="M1.8 5.2 L4 7.4 L8.6 2" fill="none" stroke="#1fb09e" stroke-width="1.5"/></svg>
<div class="abs sw" style="top:188.9px;background:#5fb0a0"></div>
<div class="t " style="left:1012.4px;top:187.8px;font-size:11px;letter-spacing:-0.567px;color:#ececec;">Custom</div>
<div class="t " style="left:1094.4px;top:187.8px;font-size:11px;letter-spacing:-0.355px;color:#ececec;">46s</div>
<div class="t " style="left:1136.2px;top:187.8px;font-size:11px;letter-spacing:-0.627px;color:#ececec;">1.6%</div>
<div class="t " style="left:1177.2px;top:187.8px;font-size:11px;letter-spacing:-0.448px;color:#ececec;">0.03 m</div>
<div class="t " style="left:1214.0px;top:187.8px;font-size:11px;letter-spacing:-0.408px;color:#ececec;">0.09 g</div>
<div class="abs lcb on" style="top:187.9px"></div>
<svg width="10" height="10" viewBox="0 0 10 10" style="left:1267px;top:187.9px"><path d="M1.8 5.2 L4 7.4 L8.6 2" fill="none" stroke="#1fb09e" stroke-width="1.5"/></svg>
<div class="abs" style="left:1000px;top:206.1px;width:6px;height:6px;background:#6a58a8;opacity:.8"></div>
<div class="t " style="left:1012.4px;top:204.0px;font-size:11px;letter-spacing:-0.459px;color:#ececec;">Travel</div>
<div class="t " style="left:1094.4px;top:204.0px;font-size:11px;letter-spacing:-0.396px;color:#ececec;">6m45s</div>
<div class="t " style="left:1136.2px;top:204.0px;font-size:11px;letter-spacing:-0.624px;color:#ececec;">13.9%</div>
<div class="abs lcb" style="top:204.1px"></div>
<div class="abs sw" style="top:221.3px;background:#c030d0"></div>
<div class="t " style="left:1012.4px;top:220.2px;font-size:11px;letter-spacing:-0.379px;color:#ececec;">Retract</div>
<div class="abs lcb" style="top:220.3px"></div>
<div class="abs sw" style="top:237.5px;background:#2aa090"></div>
<div class="t " style="left:1012.4px;top:236.4px;font-size:11px;letter-spacing:-0.260px;color:#ececec;">Unretract</div>
<div class="abs lcb" style="top:236.5px"></div>
<div class="abs sw" style="top:253.7px;background:#f0f0f0"></div>
<div class="t " style="left:1012.4px;top:252.6px;font-size:11px;letter-spacing:-0.515px;color:#ececec;">Wipe</div>
<div class="abs lcb" style="top:252.7px"></div>
<div class="abs sw" style="top:269.9px;background:#f0f0f0"></div>
<div class="t " style="left:1012.4px;top:268.8px;font-size:11px;letter-spacing:-1.027px;color:#ececec;">Seams</div>
<div class="abs lcb on" style="top:268.9px"></div>
<svg width="10" height="10" viewBox="0 0 10 10" style="left:1267px;top:268.9px"><path d="M1.8 5.2 L4 7.4 L8.6 2" fill="none" stroke="#1fb09e" stroke-width="1.5"/></svg>
<div class="t " style="left:997.9px;top:292.1px;font-size:11px;letter-spacing:-0.433px;font-weight:bold;color:#fff;">Total estimation</div>
<div class="abs" style="left:990px;top:304px;width:290px;height:1px;background:#6a6c6b"></div>
<div class="t " style="left:997.9px;top:308.8px;font-size:11px;letter-spacing:-0.362px;color:#ececec;">Total Filament:</div>
<div class="t " style="left:1093.3px;top:308.8px;font-size:11px;letter-spacing:-0.392px;color:#ececec;">9.53 m</div>
<div class="t " style="left:1135.0px;top:308.8px;font-size:11px;letter-spacing:-0.367px;color:#ececec;">28.42 g</div>
<div class="t " style="left:997.9px;top:322.8px;font-size:11px;letter-spacing:-0.424px;color:#ececec;">Model Filament:</div>
<div class="t " style="left:1093.3px;top:322.8px;font-size:11px;letter-spacing:-0.392px;color:#ececec;">9.53 m</div>
<div class="t " style="left:1135.0px;top:322.8px;font-size:11px;letter-spacing:-0.367px;color:#ececec;">28.42 g</div>
<div class="t " style="left:997.9px;top:336.9px;font-size:11px;letter-spacing:-0.735px;color:#ececec;">Cost:</div>
<div class="t " style="left:1093.3px;top:336.9px;font-size:11px;letter-spacing:-0.375px;color:#ececec;">0.57</div>
<div class="t " style="left:997.9px;top:350.9px;font-size:11px;letter-spacing:-0.448px;color:#ececec;">Prepare time:</div>
<div class="t " style="left:1093.3px;top:350.9px;font-size:11px;letter-spacing:-0.407px;color:#ececec;">8s</div>
<div class="t " style="left:997.9px;top:364.9px;font-size:11px;letter-spacing:-0.239px;color:#ececec;">Model printing time:</div>
<div class="t " style="left:1093.3px;top:364.9px;font-size:11px;letter-spacing:-0.457px;color:#ececec;">48m16s</div>
<div class="t " style="left:997.9px;top:379.0px;font-size:11px;letter-spacing:-0.257px;color:#ececec;">Total time:</div>
<div class="t " style="left:1093.3px;top:379.0px;font-size:11px;letter-spacing:-0.457px;color:#ececec;">48m24s</div>

<!-- ======= GCODE ======= -->
<div id="gcode" class="abs"></div>
<div class="abs" style="left:1059px;top:397px;width:221px;height:265px;overflow:hidden"><div class="abs" style="left:-1059px;top:-397px;width:1400px;height:720px">
<div id="gcur" class="abs"></div>
<div class="t " style="left:1064.4px;top:408.9px;font-size:10.5px;letter-spacing:-0.400px;color:#b96a3e;">39033</div>
<div class="t " style="left:1098.6px;top:408.9px;font-size:10.5px;letter-spacing:-1.503px;color:#b4b6b5;">G1</div>
<div class="t " style="left:1113.9px;top:408.9px;font-size:10.5px;letter-spacing:-0.339px;color:#fff;">X67.386 Y160.754 E.02395</div>
<div class="t " style="left:1064.4px;top:423.1px;font-size:10.5px;letter-spacing:-0.400px;color:#b96a3e;">39034</div>
<div class="t " style="left:1098.6px;top:423.1px;font-size:10.5px;letter-spacing:-1.503px;color:#b4b6b5;">G1</div>
<div class="t " style="left:1113.9px;top:423.1px;font-size:10.5px;letter-spacing:-0.339px;color:#fff;">X83.162 Y176.531 E.62934</div>
<div class="t " style="left:1064.4px;top:437.2px;font-size:10.5px;letter-spacing:-0.400px;color:#b96a3e;">39035</div>
<div class="t " style="left:1098.6px;top:437.2px;font-size:10.5px;letter-spacing:-1.503px;color:#b4b6b5;">G1</div>
<div class="t " style="left:1113.9px;top:437.2px;font-size:10.5px;letter-spacing:-0.339px;color:#fff;">X82.552 Y176.504 E.01722</div>
<div class="t " style="left:1064.4px;top:451.3px;font-size:10.5px;letter-spacing:-0.400px;color:#b96a3e;">39036</div>
<div class="t " style="left:1098.6px;top:451.3px;font-size:10.5px;letter-spacing:-1.503px;color:#b4b6b5;">G1</div>
<div class="t " style="left:1113.9px;top:451.3px;font-size:10.5px;letter-spacing:-0.339px;color:#fff;">X81.696 Y176.421 E.02425</div>
<div class="t " style="left:1064.4px;top:465.5px;font-size:10.5px;letter-spacing:-0.400px;color:#b96a3e;">39037</div>
<div class="t " style="left:1098.6px;top:465.5px;font-size:10.5px;letter-spacing:-1.503px;color:#b4b6b5;">G1</div>
<div class="t " style="left:1113.9px;top:465.5px;font-size:10.5px;letter-spacing:-0.339px;color:#fff;">X81.143 Y176.343 E.01578</div>
<div class="t " style="left:1064.4px;top:479.6px;font-size:10.5px;letter-spacing:-0.400px;color:#b96a3e;">39038</div>
<div class="t " style="left:1098.6px;top:479.6px;font-size:10.5px;letter-spacing:-1.503px;color:#b4b6b5;">G1</div>
<div class="t " style="left:1113.9px;top:479.6px;font-size:10.5px;letter-spacing:-0.339px;color:#fff;">X80.298 Y176.187 E.02424</div>
<div class="t " style="left:1064.4px;top:493.8px;font-size:10.5px;letter-spacing:-0.400px;color:#b96a3e;">39039</div>
<div class="t " style="left:1098.6px;top:493.8px;font-size:10.5px;letter-spacing:-1.503px;color:#b4b6b5;">G1</div>
<div class="t " style="left:1113.9px;top:493.8px;font-size:10.5px;letter-spacing:-0.387px;color:#fff;">X79.467 Y175.987 E.0241</div>
<div class="t " style="left:1064.4px;top:507.9px;font-size:10.5px;letter-spacing:-0.400px;color:#b96a3e;">39040</div>
<div class="t " style="left:1098.6px;top:507.9px;font-size:10.5px;letter-spacing:-1.503px;color:#b4b6b5;">G1</div>
<div class="t " style="left:1113.9px;top:507.9px;font-size:10.5px;letter-spacing:-0.339px;color:#fff;">X79.162 Y175.897 E.00897</div>
<div class="t " style="left:1064.4px;top:522.0px;font-size:10.5px;letter-spacing:-0.400px;color:#b96a3e;">39041</div>
<div class="t " style="left:1098.6px;top:522.0px;font-size:10.5px;letter-spacing:-1.503px;color:#b4b6b5;">G1</div>
<div class="t " style="left:1113.9px;top:522.0px;font-size:10.5px;letter-spacing:-0.353px;color:#fff;">X67.781 Y164.516 E.454</div>
<div class="t " style="left:1064.4px;top:536.2px;font-size:10.5px;letter-spacing:-0.400px;color:#b96a3e;">39042</div>
<div class="t " style="left:1098.9px;top:536.2px;font-size:10.5px;letter-spacing:-0.028px;color:#b4b6b5;">; stop printing object Cylinder id:15 copy 0</div>
<div class="t " style="left:1064.4px;top:550.3px;font-size:10.5px;letter-spacing:-0.400px;color:#b96a3e;">39043</div>
<div class="t " style="left:1098.9px;top:550.3px;font-size:10.5px;letter-spacing:-0.818px;color:#b4b6b5;">;LAYER_CHANGE</div>
<div class="t " style="left:1064.4px;top:564.5px;font-size:10.5px;letter-spacing:-0.400px;color:#b96a3e;">39044</div>
<div class="t " style="left:1098.9px;top:564.5px;font-size:10.5px;letter-spacing:-0.524px;color:#b4b6b5;">;Z:5.2</div>
<div class="t " style="left:1064.4px;top:578.6px;font-size:10.5px;letter-spacing:-0.400px;color:#b96a3e;">39045</div>
<div class="t " style="left:1098.9px;top:578.6px;font-size:10.5px;letter-spacing:-0.494px;color:#b4b6b5;">;HEIGHT:0.2</div>
<div class="t " style="left:1064.4px;top:592.7px;font-size:10.5px;letter-spacing:-0.400px;color:#b96a3e;">39046</div>
<div class="t " style="left:1098.9px;top:592.7px;font-size:10.5px;letter-spacing:-0.831px;color:#b4b6b5;">TIMELAPSE_TAKE_FRAME</div>
<div class="t " style="left:1064.4px;top:606.9px;font-size:10.5px;letter-spacing:-0.400px;color:#b96a3e;">39047</div>
<div class="t " style="left:1064.4px;top:621.0px;font-size:10.5px;letter-spacing:-0.400px;color:#b96a3e;">39048</div>
<div class="t " style="left:1098.9px;top:621.0px;font-size:10.5px;letter-spacing:-0.873px;color:#b4b6b5;">;AFTER_LAYER_CHANGE</div>
<div class="t " style="left:1064.4px;top:635.2px;font-size:10.5px;letter-spacing:-0.400px;color:#b96a3e;">39049</div>
<div class="t " style="left:1098.9px;top:635.2px;font-size:10.5px;letter-spacing:-0.553px;color:#b4b6b5;">;5.2</div>
</div></div>

<div id="bottomline" class="abs"></div>

</body></html>
